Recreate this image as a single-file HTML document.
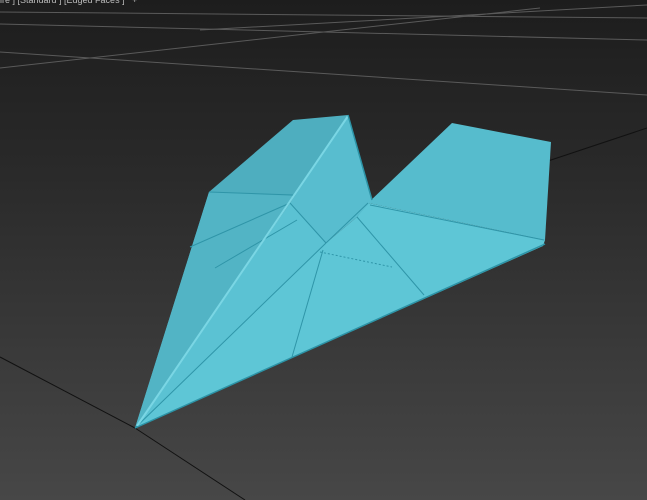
<!DOCTYPE html>
<html><head><style>
html,body{margin:0;padding:0;width:647px;height:500px;overflow:hidden;background:#333}
svg{display:block}
.t{position:absolute;left:0;top:-5px;font:9px "Liberation Sans",sans-serif;color:#bbb;white-space:pre}
</style></head><body>
<svg width="647" height="500" viewBox="0 0 647 500">
<defs>
<linearGradient id="bg" x1="0" y1="0" x2="0" y2="1">
<stop offset="0" stop-color="#1d1d1d"/><stop offset="0.35" stop-color="#2a2a2a"/><stop offset="1" stop-color="#474747"/>
</linearGradient>
</defs>
<rect width="647" height="500" fill="url(#bg)"/>
<g stroke="#5a5a5a" stroke-width="1" fill="none">
<line x1="0" y1="52" x2="647" y2="95"/>
<line x1="0" y1="68" x2="540" y2="8"/>
<line x1="0" y1="24" x2="647" y2="40"/>
<line x1="0" y1="12" x2="647" y2="18"/>
<line x1="200" y1="30" x2="647" y2="5"/>
</g>
<g stroke="#111" stroke-width="1" fill="none">
<line x1="0" y1="357" x2="135" y2="428"/>
<line x1="135" y1="428" x2="245" y2="500"/>
<line x1="545" y1="162" x2="647" y2="128"/>
</g>
<!-- lower body -->
<polygon points="135,428 326,243 357,217 368,203 545,240 543,246" fill="#5ec6d6"/>
<!-- right wing -->
<polygon points="368,203 452,123 551,142 545,240" fill="#56bccd"/>
<!-- left wing -->
<polygon points="135,428 209,192 293,120 348,115 292,200" fill="#4eaebf"/>
<polygon points="135,428 209,192 293,196" fill="#52b4c5"/>
<!-- fin right of spine -->
<polygon points="348,115 372,200 357,217 326,243 290,203" fill="#58bdcf"/>
<polygon points="135,428 290,203 326,243" fill="#5bc2d3"/>
<g stroke="#2f95a8" stroke-width="1" fill="none">
<line x1="209" y1="192" x2="293" y2="195"/>
<line x1="190" y1="247" x2="290" y2="203"/>
<line x1="290" y1="203" x2="326" y2="243"/>
<line x1="326" y1="243" x2="368" y2="203"/>
<line x1="357" y1="217" x2="424" y2="295"/>
<line x1="370" y1="205" x2="544" y2="240"/>
<line x1="323" y1="250" x2="292" y2="357"/>
<line x1="135" y1="428" x2="326" y2="243"/>
<line x1="297" y1="220" x2="215" y2="268"/>
<line x1="320" y1="252" x2="392" y2="267" stroke-dasharray="2,2"/>
</g>
<g stroke="#7ad6e4" stroke-width="2" fill="none">
<line x1="137" y1="426" x2="348" y2="116"/>
</g>
<g stroke="#2c93a6" stroke-width="1.5" fill="none">
<line x1="135" y1="428" x2="545" y2="244"/>
<line x1="348" y1="115" x2="372" y2="200"/>
</g>
</svg>
<div class="t">ire ] [Standard ] [Edged Faces ]   +</div>
</body></html>
